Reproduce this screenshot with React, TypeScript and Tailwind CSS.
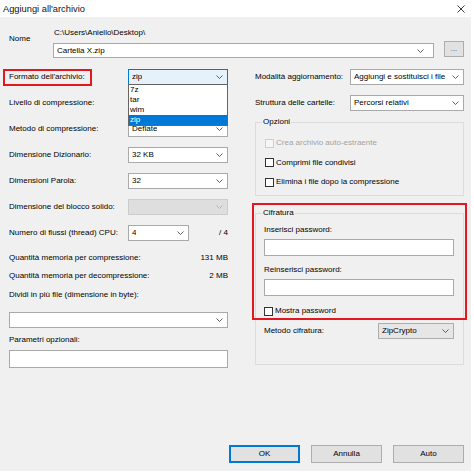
import React from "react";

function Chevron({ color = "#5f5f5f" }: { color?: string }) {
  return (
    <svg width="7" height="4" viewBox="0 0 7 4" className="shrink-0">
      <polyline points="0.5,0.5 3.5,3.5 6.5,0.5" fill="none" stroke={color} strokeWidth="1" />
    </svg>
  );
}

function Select({
  className = "",
  text = "",
  tone = "white",
}: {
  className?: string;
  text?: string;
  tone?: "white" | "gray" | "disabled" | "focus";
}) {
  const tones: Record<string, string> = {
    white: "bg-white border-[#a9a9a9]",
    gray: "bg-[#e6e6e6] border-[#adadad]",
    disabled: "bg-[#dedede] border-[#cccccc]",
    focus: "bg-[#e5f1fb] border-[#0078d7]",
  };
  return (
    <div
      className={`h-[16px] border flex items-center justify-between pl-[3px] pr-[4px] ${tones[tone]} ${className}`}
    >
      <span className="leading-[10px] truncate">{text}</span>
      <Chevron color={tone === "disabled" ? "#b5b5b5" : "#5f5f5f"} />
    </div>
  );
}

function Check({ label, disabled = false }: { label: string; disabled?: boolean }) {
  return (
    <div className="flex items-center h-[10px] gap-[2px]">
      <div
        className={`w-[9px] h-[9px] border ${
          disabled ? "border-[#cfcfcf] bg-[#f6f6f6]" : "border-[#333333] bg-white"
        }`}
      />
      <span className={`leading-[10px] ${disabled ? "text-[#a3a3a3]" : "text-black"}`}>{label}</span>
    </div>
  );
}

function Row({ label, children }: { label: React.ReactNode; children: React.ReactNode }) {
  return (
    <div className="relative flex items-center justify-between h-[16px]">
      <span className="leading-[10px]">{label}</span>
      {children}
    </div>
  );
}

export default function App() {
  return (
    <div className="w-[474px] h-[474px] bg-white overflow-hidden font-['Liberation_Sans',Arial,sans-serif] text-[8px] text-black">
      {/* Title bar */}
      <div className="h-[17px] flex items-center justify-between pl-[3px] pr-[9px]">
        <span className="text-[9.3px] leading-[12px] text-[#111]">Aggiungi all'archivio</span>
        <svg width="8" height="8" viewBox="0 0 8 8">
          <path d="M0.5 0.5 L7.5 7.5 M7.5 0.5 L0.5 7.5" stroke="#222" strokeWidth="0.9" />
        </svg>
      </div>

      {/* Body */}
      <div className="w-[471px] h-[454px] bg-[#f0f0f0] flex flex-col pl-[9px] pt-[11px] pb-[8px] pr-[7px]">
        {/* Nome */}
        <div className="flex">
          <div className="w-[44px] pt-[6px] leading-[10px]">Nome</div>
          <div className="flex flex-col">
            <div className="h-[10px] leading-[10px] pl-[1px]">C:\Users\Aniello\Desktop\</div>
            <div className="flex items-end gap-[10px] mt-[3px]">
              <div className="w-[381px] h-[15px] bg-white border border-[#a9a9a9] flex items-center justify-between pl-[3px] pr-[9px]">
                <span className="leading-[10px]">Cartella X.zip</span>
                <Chevron />
              </div>
              <div className="w-[20px] h-[16px] bg-[#e1e1e1] border border-[#adadad] flex items-center justify-center text-[#555] leading-[8px] mb-[1px]">
                ...
              </div>
            </div>
          </div>
        </div>

        {/* Two columns */}
        <div className="flex mt-[11px] gap-[27px]">
          {/* Left column */}
          <div className="w-[219px] flex flex-col">
            <div className="flex flex-col gap-[10px]">
              <div className="relative flex items-center justify-between h-[16px]">
                <span className="relative leading-[10px]">
                  Formato dell'archivio:
                  <span className="absolute left-[-6px] top-[-3.5px] w-[89px] h-[17px] border-2 border-[#e3171f]" />
                </span>
                <div className="relative">
                  <Select className="w-[100px]" text="zip" tone="focus" />
                  <div className="absolute z-10 left-0 top-[15px] w-[100px] h-[42px] bg-white border border-[#646464] flex flex-col">
                    <div className="h-[10px] leading-[10px] pl-[1px]">7z</div>
                    <div className="h-[10px] leading-[10px] pl-[1px]">tar</div>
                    <div className="h-[10px] leading-[10px] pl-[1px]">wim</div>
                    <div className="h-[10px] leading-[10px] pl-[1px] bg-[#0078d7] text-white">zip</div>
                  </div>
                </div>
              </div>
              <Row label="Livello di compressione:">
                <Select className="w-[100px]" text="" />
              </Row>
              <Row label="Metodo di compressione:">
                <Select className="w-[100px]" text="Deflate" />
              </Row>
              <Row label="Dimensione Dizionario:">
                <Select className="w-[100px]" text="32 KB" />
              </Row>
              <Row label="Dimensioni Parola:">
                <Select className="w-[100px]" text="32" />
              </Row>
              <Row label="Dimensione del blocco solido:">
                <Select className="w-[100px]" text="" tone="disabled" />
              </Row>
              <div className="flex items-center h-[16px]">
                <span className="leading-[10px] w-[119px]">Numero di flussi (thread) CPU:</span>
                <Select className="w-[61px]" text="4" />
                <span className="ml-auto leading-[10px]">/ 4</span>
              </div>
            </div>

            <div className="mt-[12px] h-[10px] flex justify-between leading-[10px]">
              <span>Quantità memoria per compressione:</span>
              <span>131 MB</span>
            </div>
            <div className="mt-[8px] h-[10px] flex justify-between leading-[10px]">
              <span>Quantità memoria per decompressione:</span>
              <span>2 MB</span>
            </div>
            <div className="mt-[9px] h-[10px] leading-[10px]">Dividi in più file (dimensione in byte):</div>
            <Select className="mt-[12px] w-[219px]" text="" />
            <div className="mt-[7px] h-[10px] leading-[10px]">Parametri opzionali:</div>
            <div className="mt-[5px] w-[219px] h-[18px] bg-white border border-[#a9a9a9]" />
          </div>

          {/* Right column */}
          <div className="w-[210px] flex flex-col">
            <div className="flex items-center justify-between h-[16px]">
              <span className="leading-[10px]">Modalità aggiornamento:</span>
              <Select className="w-[114px]" text="Aggiungi e sostituisci i file" />
            </div>
            <div className="flex items-center justify-between h-[16px] mt-[10px]">
              <span className="leading-[10px]">Struttura delle cartelle:</span>
              <Select className="w-[114px]" text="Percorsi relativi" />
            </div>

            {/* Opzioni group */}
            <div className="relative mt-[11px] h-[74px] border border-[#dcdcdc] pl-[9px] pt-[15px] flex flex-col gap-[9.5px]">
              <span className="absolute left-[6px] top-[-6px] px-[1px] bg-[#f0f0f0] leading-[10px]">Opzioni</span>
              <Check label="Crea archivio auto-estraente" disabled />
              <Check label="Comprimi file condivisi" />
              <Check label="Elimina i file dopo la compressione" />
            </div>

            {/* Cifratura group */}
            <div className="relative mt-[17px] h-[152px] border border-[#dcdcdc] pl-[8px] pr-[9px] pt-[11px] flex flex-col">
              <span className="absolute left-[6px] top-[-6px] px-[1px] bg-[#f0f0f0] leading-[10px]">Cifratura</span>
              <div className="h-[10px] leading-[10px]">Inserisci password:</div>
              <div className="mt-[4px] h-[17px] bg-white border border-[#a9a9a9]" />
              <div className="mt-[9px] h-[10px] leading-[10px]">Reinserisci password:</div>
              <div className="mt-[4px] h-[17px] bg-white border border-[#a9a9a9]" />
              <div className="mt-[10px]">
                <Check label="Mostra password" />
              </div>
              <div className="mt-[7px] flex items-center justify-between h-[16px]">
                <span className="leading-[10px]">Metodo cifratura:</span>
                <Select className="w-[76px]" text="ZipCrypto" tone="gray" />
              </div>
              <span className="absolute left-[-4px] top-[-11px] w-[215px] h-[117px] border-2 border-[#e3171f]" />
            </div>
          </div>
        </div>

        {/* Buttons */}
        <div className="mt-auto flex justify-end gap-[11px]">
          <div className="w-[71px] h-[18px] bg-[#e1e1e1] border-2 border-[#0078d7] flex items-center justify-center leading-[10px]">
            OK
          </div>
          <div className="w-[71px] h-[18px] bg-[#e1e1e1] border border-[#adadad] flex items-center justify-center leading-[10px]">
            Annulla
          </div>
          <div className="w-[71px] h-[18px] bg-[#e1e1e1] border border-[#adadad] flex items-center justify-center leading-[10px]">
            Auto
          </div>
        </div>
      </div>
    </div>
  );
}
